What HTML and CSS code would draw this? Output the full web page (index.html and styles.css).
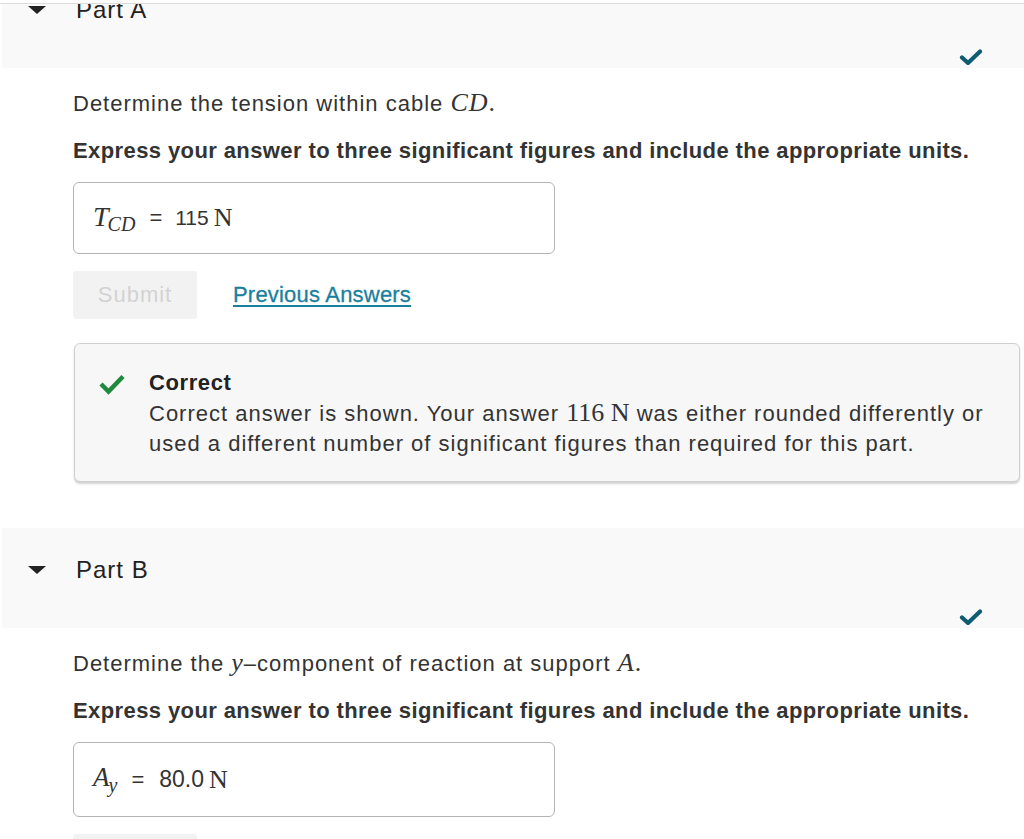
FILE: index.html
```html
<!DOCTYPE html>
<html>
<head>
<meta charset="utf-8">
<link rel="stylesheet" href="styles.css">
</head>
<body>
<div class="topline"></div>
<div class="page">
  <section class="part">
    <div class="part-head">
      <span class="tri"></span>
      <span class="part-title">Part A</span>
      <svg class="done" viewBox="0 0 24 16" width="24" height="16"><path d="M3 8.5 L9 14 L21 2.5" fill="none" stroke="#0f5b72" stroke-width="4.2" stroke-linecap="round" stroke-linejoin="round"/></svg>
    </div>
    <div class="part-body">
      <p class="q">Determine the tension within cable <span class="mi">CD</span><span class="mn">.</span></p>
      <p class="instr">Express your answer to three significant figures and include the appropriate units.</p>
      <div class="answer">
        <span class="var"><span class="mi">T</span><sub class="mi">CD</sub></span>
        <span class="eq">=</span>
        <span class="val">115</span>
        <span class="unit">N</span>
      </div>
      <div class="actions">
        <button class="submit" disabled>Submit</button>
        <a class="prev" href="#">Previous Answers</a>
      </div>
      <div class="feedback">
        <svg class="ok" viewBox="0 0 28 22" width="28" height="22"><path d="M3 11 L10.5 18.5 L25 3.5" fill="none" stroke="#1f8a3c" stroke-width="4.5" stroke-linejoin="miter"/></svg>
        <div class="fb-text">
          <div class="fb-title">Correct</div>
          <div class="fb-msg">Correct answer is shown. Your answer <span class="mn">116 N</span> was either rounded differently or used a different number of significant figures than required for this part.</div>
        </div>
      </div>
    </div>
  </section>

  <section class="part part-b">
    <div class="part-head">
      <span class="tri"></span>
      <span class="part-title">Part B</span>
      <svg class="done" viewBox="0 0 24 16" width="24" height="16"><path d="M3 8.5 L9 14 L21 2.5" fill="none" stroke="#0f5b72" stroke-width="4.2" stroke-linecap="round" stroke-linejoin="round"/></svg>
    </div>
    <div class="part-body">
      <p class="q">Determine the <span class="mi">y</span>&#8211;component of reaction at support <span class="mi">A</span><span class="mn">.</span></p>
      <p class="instr">Express your answer to three significant figures and include the appropriate units.</p>
      <div class="answer answer-b">
        <span class="var var-b"><span class="mi">A</span><sub class="mi">y</sub></span>
        <span class="eq">=</span>
        <span class="val val-b">80.0</span>
        <span class="unit">N</span>
      </div>
      <div class="actions">
        <button class="submit" disabled>Submit</button>
      </div>
    </div>
  </section>
</div>
</body>
</html>
```

FILE: styles.css
```css
* { box-sizing: border-box; }
html, body { margin: 0; padding: 0; background: #fff; }
body {
  font-family: "Liberation Sans", Arial, Helvetica, sans-serif;
  color: #333;
  font-size: 22px;
  letter-spacing: 1px;
  overflow: hidden;
}
.topline {
  position: fixed;
  top: 0; left: 0; right: 0;
  height: 4px;
  background: #fff;
  border-bottom: 1px solid #dcdcdc;
  z-index: 5;
}
.page {
  margin-top: -32px;
}
.part-head {
  position: relative;
  margin-left: 2px;
  height: 100px;
  background: #f9f9f9;
  display: flex;
  align-items: center;
  padding-bottom: 16px;
}
.tri {
  width: 0; height: 0;
  margin-left: 26px;
  border-left: 9px solid transparent;
  border-right: 9px solid transparent;
  border-top: 8px solid #222;
}
.part-title {
  margin-left: 30px;
  font-size: 24px;
  line-height: 28px;
  color: #222;
}
.done {
  position: absolute;
  right: 41px;
  bottom: 3px;
}
.part-body {
  padding: 23px 4px 0 73px;
}
.q, .instr {
  margin: 0;
  line-height: 24px;
}
.instr {
  margin-top: 23px;
  font-weight: bold;
  letter-spacing: 0.4px;
}
.mi {
  font-family: "Liberation Serif", "Times New Roman", serif;
  font-style: italic;
  font-size: 26px;
  letter-spacing: 0;
}
.mn {
  font-family: "Liberation Serif", "Times New Roman", serif;
  font-size: 26px;
  letter-spacing: 0;
}
.q .mi { letter-spacing: 1px; }
.answer {
  margin-top: 19px;
  width: 482px;
  height: 72px;
  border: 1.5px solid #b4b4b4;
  border-radius: 6px;
  display: flex;
  align-items: center;
  padding-left: 19px;
}
.answer-b { height: 75px; margin-top: 19px; }
.var { letter-spacing: 0; white-space: nowrap; }
.var .mi { font-size: 28px; }
.var sub.mi {
  font-size: 20px;
  vertical-align: -5px;
  margin-left: -1px;
}
.var-b .mi { font-size: 27px; }
.var-b sub.mi { font-size: 20px; vertical-align: -6px; }
.eq {
  margin-left: 14px;
  font-size: 22px;
  letter-spacing: 0;
}
.val {
  margin-left: 13px;
  font-size: 21px;
  letter-spacing: 0;
}
.val-b { font-size: 23px; margin-left: 15px; }
.unit {
  margin-left: 5px;
  font-family: "Liberation Serif", "Times New Roman", serif;
  font-size: 26px;
  letter-spacing: 0;
}
.actions {
  margin-top: 17px;
  display: flex;
  align-items: center;
}
.submit {
  width: 124px;
  height: 48px;
  border: none;
  border-radius: 3px;
  background: #f2f2f2;
  color: #d2d2d2;
  font-family: "Liberation Sans", Arial, sans-serif;
  font-size: 22px;
  letter-spacing: 1px;
  padding: 0;
}
.prev {
  margin-left: 36px;
  color: #1a7f9f;
  font-size: 22px;
  letter-spacing: 0.2px;
  text-decoration: underline;
  text-underline-offset: 3px;
  -webkit-text-stroke: 0.3px #1a7f9f;
}
.feedback {
  margin-top: 24px;
  margin-left: 1px;
  border: 1px solid #cfcfcf;
  border-radius: 6px;
  background: #f7f7f7;
  box-shadow: 0 2px 2px rgba(0,0,0,0.18);
  display: flex;
  padding: 24px 20px 22px 23px;
  min-height: 138px;
}
.ok {
  flex: none;
  margin-top: 5px;
}
.fb-text {
  margin-left: 23px;
  line-height: 30px;
}
.fb-title {
  font-weight: bold;
  color: #222;
  letter-spacing: 0.6px;
}
.fb-msg { color: #333; }
.part-b { margin-top: 46px; }
```
